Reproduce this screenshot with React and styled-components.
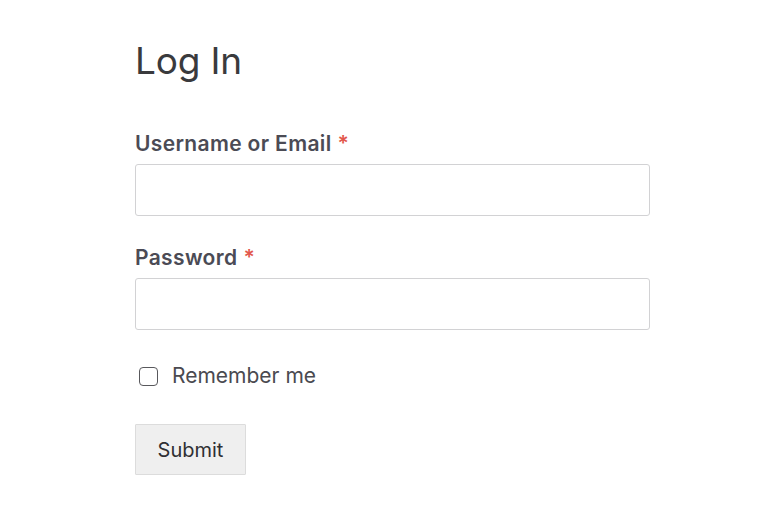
import React from "react";
import styled, { createGlobalStyle } from "styled-components";

const Global = createGlobalStyle`
  body {
    margin: 0;
    background: #fff;
    font-family: Inter, Roboto, "Liberation Sans", sans-serif;
  }
`;

const Page = styled.div`
  display: flex;
  flex-direction: column;
  align-items: flex-start;
  width: 515px;
  margin-left: 135px;
  padding-top: 38px;
`;

const Titulo = styled.h1`
  margin: 0 0 48px;
  font-size: 37px;
  font-weight: 400;
  line-height: 46px;
  letter-spacing: -0.2px;
  color: #3a3a3d;
`;

const Campo = styled.div`
  display: flex;
  flex-direction: column;
  gap: 8px;
  width: 100%;
  margin-bottom: 30px;
`;

const Rotulo = styled.label`
  font-size: 21px;
  font-weight: 600;
  line-height: 24px;
  letter-spacing: 0.35px;
  color: #4b4b55;
`;

const Obrigatorio = styled.span`
  color: #e2574c;
  margin-left: 6px;
`;

const Entrada = styled.input`
  box-sizing: border-box;
  width: 100%;
  height: 52px;
  border: 1.5px solid #d2d2d4;
  border-radius: 3px;
  background: #fff;
  font: inherit;
  font-size: 18px;
  padding: 0 12px;
  outline: none;
`;

const LinhaLembrar = styled.label`
  display: flex;
  align-items: center;
  gap: 14px;
  padding-left: 4px;
  margin-top: 4px;
  font-size: 21px;
  color: #4a4a50;
  line-height: 24px;
`;

const Caixa = styled.span`
  box-sizing: border-box;
  width: 19px;
  height: 19px;
  border: 1.5px solid #58585c;
  border-radius: 4px;
`;

const Botao = styled.button`
  box-sizing: border-box;
  margin-top: 36px;
  width: 111px;
  height: 51px;
  background: #efefef;
  border: 1px solid #dcdcdc;
  border-radius: 1px;
  font-family: inherit;
  font-size: 20px;
  color: #2f2f33;
`;

export default function App() {
  return (
    <>
      <Global />
      <Page>
        <Titulo>Log In</Titulo>
        <Campo>
          <Rotulo>
            Username or Email<Obrigatorio>*</Obrigatorio>
          </Rotulo>
          <Entrada type="text" />
        </Campo>
        <Campo>
          <Rotulo>
            Password<Obrigatorio>*</Obrigatorio>
          </Rotulo>
          <Entrada type="password" />
        </Campo>
        <LinhaLembrar>
          <Caixa />
          Remember me
        </LinhaLembrar>
        <Botao>Submit</Botao>
      </Page>
    </>
  );
}
